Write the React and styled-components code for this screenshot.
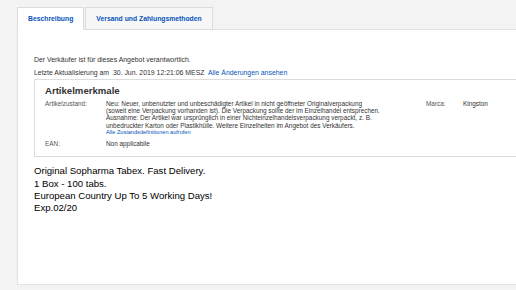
import React from 'react'
import styled, { createGlobalStyle } from 'styled-components'

const Global = createGlobalStyle`
  html, body {
    margin: 0;
    padding: 0;
    background: #f3f3f3;
    overflow: hidden;
  }
  body {
    font-family: "Liberation Sans", Arial, sans-serif;
  }
`

const App = () => {
  return (
    <Page>
      <Global />
      <Tabs>
        <Tab active>Beschreibung</Tab>
        <Tab>Versand und Zahlungsmethoden</Tab>
      </Tabs>

      <Panel>
        <Note>Der Verkäufer ist für dieses Angebot verantwortlich.</Note>
        <Note>
          Letzte Aktualisierung am&nbsp; 30. Jun. 2019 12:21:06 MESZ&nbsp; <Link>Alle Änderungen ansehen</Link>
        </Note>

        <Specs>
          <SpecsTitle>Artikelmerkmale</SpecsTitle>
          <SpecRow>
            <Label>Artikelzustand:</Label>
            <Value wide>
              Neu: Neuer, unbenutzter und unbeschädigter Artikel in nicht geöffneter Originalverpackung<br />
              (soweit eine Verpackung vorhanden ist). Die Verpackung sollte der im Einzelhandel entsprechen.<br />
              Ausnahme: Der Artikel war ursprünglich in einer Nichteinzelhandelsverpackung verpackt, z. B.<br />
              unbedruckter Karton oder Plastikhülle. Weitere Einzelheiten im Angebot des Verkäufers.
              <SmallLink>Alle Zustandsdefinitionen aufrufen</SmallLink>
            </Value>
            <Label narrow>Marca:</Label>
            <Value>Kingston</Value>
          </SpecRow>
          <SpecRow>
            <Label>EAN:</Label>
            <Value>Non applicabile</Value>
          </SpecRow>
        </Specs>

        <Description>
          Original Sopharma Tabex. Fast Delivery.<br />
          1 Box - 100 tabs.<br />
          European Country Up To 5 Working Days!<br />
          Exp.02/20
        </Description>
      </Panel>
    </Page>
  )
}
export default App

const Page = styled.div`
padding: 7px 0 0 17px;
width: 600px;
`

const Tabs = styled.div`
display: flex;
gap: 1px;
position: relative;
z-index: 1;
`

const Tab = styled.div`
height: 21px;
padding: 0 10px;
display: flex;
align-items: center;
font-size: 6.8px;
font-weight: bold;
color: #0654ba;
background: ${p => (p.active ? '#fff' : '#f7f7f7')};
border: 1px solid #dcdcdc;
border-bottom: 1px solid ${p => (p.active ? '#fff' : '#dcdcdc')};
`

const Panel = styled.div`
margin-top: -1px;
height: 231px;
padding: 23px 0 0 16px;
background: #fff;
border: 1px solid #e2e2e2;
box-shadow: 0 1px 1px rgba(0, 0, 0, 0.06);
`

const Note = styled.div`
font-size: 6.9px;
line-height: 13px;
color: #333;
`

const Link = styled.span`
color: #0654ba;
`

const Specs = styled.div`
border: 1px solid #dcdcdc;
padding: 5px 0 5px 10px;
`

const SpecsTitle = styled.div`
font-size: 9.6px;
line-height: 11px;
font-weight: bold;
color: #333;
margin-bottom: 4px;
`

const SpecRow = styled.div`
display: flex;
font-size: 6.4px;
line-height: 7.2px;
color: #333;
margin-bottom: 4px;
`

const Label = styled.div`
width: ${p => (p.narrow ? '37px' : '61px')};
color: #555;
flex-shrink: 0;
`

const Value = styled.div`
flex-shrink: 0;
width: ${p => (p.wide ? '320px' : 'auto')};
`

const SmallLink = styled.div`
color: #0654ba;
font-size: 5.6px;
`

const Description = styled.div`
margin-top: 8px;
font-size: 9.6px;
line-height: 12.4px;
color: #000;
`
